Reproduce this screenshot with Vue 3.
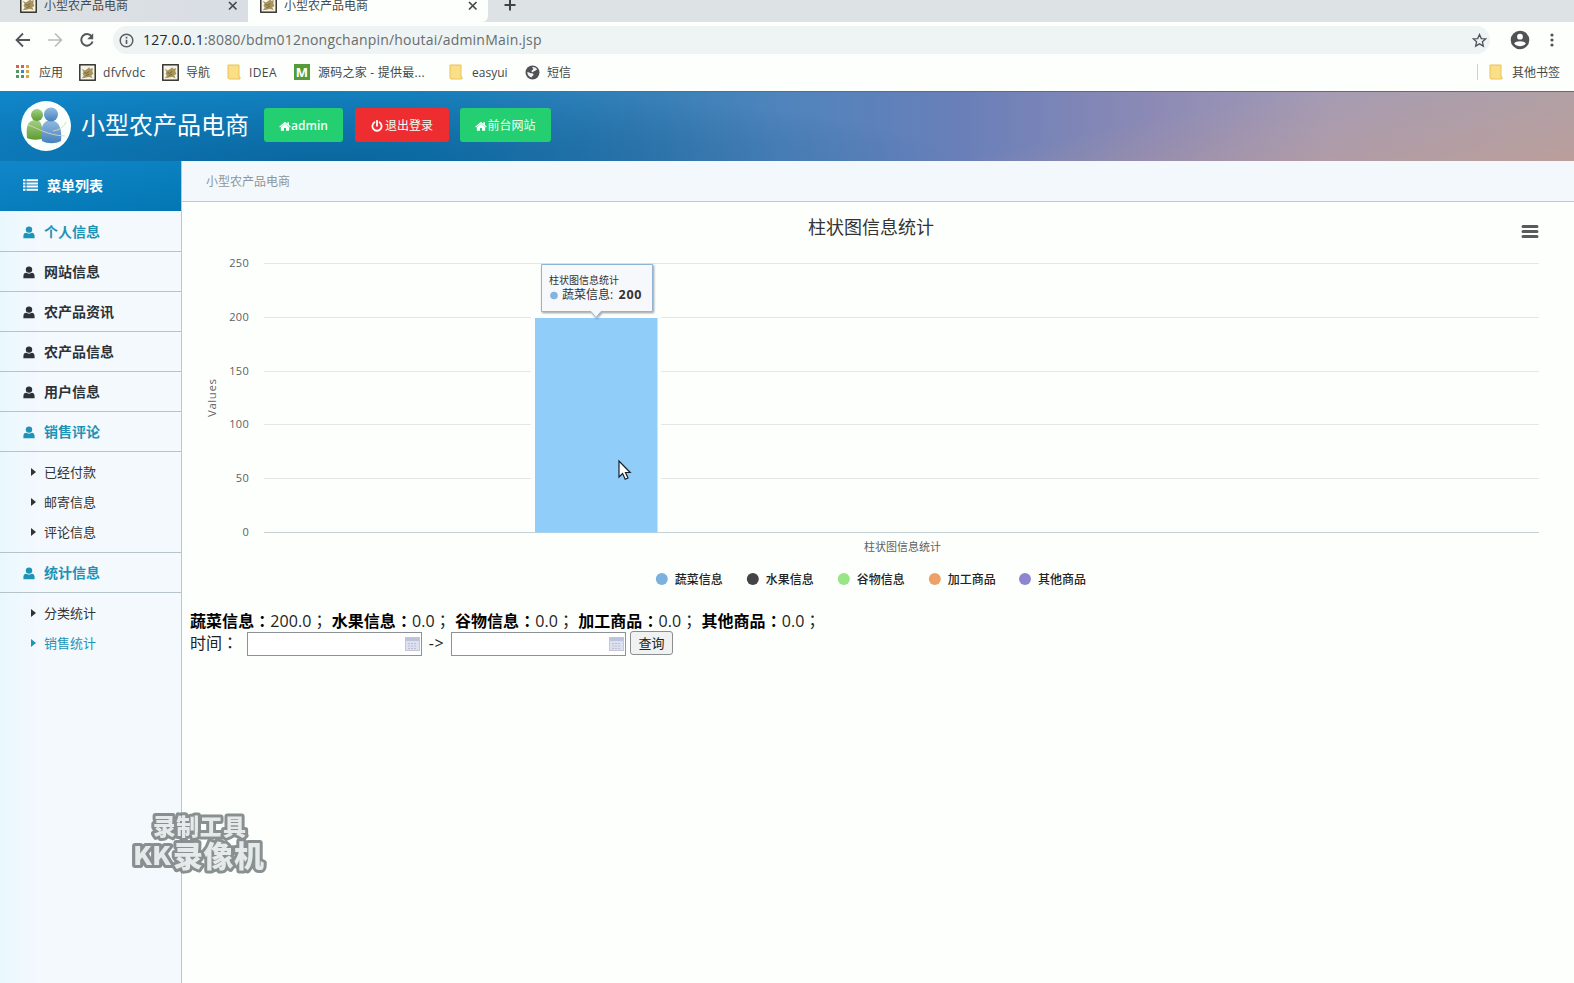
<script setup>
const tabs = [
  { title: '小型农产品电商', active: false },
  { title: '小型农产品电商', active: true }
]
const menu = [
  { label: '个人信息', active: true },
  { label: '网站信息' },
  { label: '农产品资讯' },
  { label: '农产品信息' },
  { label: '用户信息' },
  { label: '销售评论', active: true, children: [{ label: '已经付款' }, { label: '邮寄信息' }, { label: '评论信息' }] },
  { label: '统计信息', active: true, children: [{ label: '分类统计' }, { label: '销售统计', active: true }] }
]
const ticks = [
  { v: 250, y: 263.5 }, { v: 200, y: 317.5 }, { v: 150, y: 371.5 },
  { v: 100, y: 424.5 }, { v: 50, y: 478.5 }, { v: 0, y: 532.5 }
]
const legend = [
  { name: '蔬菜信息', color: '#7cb0df', x: 661.8 },
  { name: '水果信息', color: '#434348', x: 752.8 },
  { name: '谷物信息', color: '#98e585', x: 843.8 },
  { name: '加工商品', color: '#eda168', x: 934.8 },
  { name: '其他商品', color: '#8f84d0', x: 1025 }
]
const totals = [
  ['蔬菜信息', '200.0'], ['水果信息', '0.0'], ['谷物信息', '0.0'], ['加工商品', '0.0'], ['其他商品', '0.0']
]
const appColors = ['#d8604f', '#d8604f', '#d8a54f', '#4f9a62', '#4a7fc9', '#d8a54f', '#4f9a62', '#4f9a62', '#d8a54f']
</script>

<template>
  <div class="page">
    <svg class="defs" width="0" height="0">
      <symbol id="cat" viewBox="0 0 16 16">
        <rect x=".75" y=".75" width="14.5" height="14.5" fill="#f6f4ea" stroke="#26251f" stroke-width="1.3" />
        <path d="M2.500 4.500l3 1.500 2.500-1.500 1.500-1.500 1 1.500 2.800-.5-.8 2.500 1 3-2 1 1.300 3-3-1.200-2 .2-2 .5-3.300.5 2-2.500-1.200-2 1-1.500z" fill="#a8955a" />
        <path d="M5 8l2 .8 2.500-1.800M6.500 11l3-1.500" stroke="#6d6140" stroke-width=".8" fill="none" />
      </symbol>
      <symbol id="folder" viewBox="0 0 14 16">
        <path d="M1 1h11v12h1v2H2l-1-1z" fill="#fbdf86" stroke="#e9c25c" />
      </symbol>
      <symbol id="home" viewBox="0 0 14 12">
        <path d="M7 .8L0 6.8l1 1L7 3l6 4.8 1-1-2.3-2V1.500h-1.900v1.700z" fill="#fff" />
        <path d="M2 7.600L7 3.200l5 4.400V11.700H8.200V8.500H5.800v3.200H2z" fill="#fff" />
      </symbol>
      <symbol id="user" viewBox="0 0 12 13">
        <circle cx="6" cy="3.600" r="3.200" />
        <path d="M.4 12.200V9.800C.6 7.900 1.600 7 3 6.800c1.700 1.100 4.300 1.100 6 0 1.400.2 2.400 1.100 2.600 3v2.400z" />
      </symbol>
    </svg>

    <header class="browser">
      <div class="tabs">
        <div v-for="(t, i) in tabs" :key="i" class="tab" :class="{ on: t.active }">
          <svg class="fav" width="17" height="17"><use href="#cat" /></svg>
          <span>{{ t.title }}</span>
          <svg class="x" width="10" height="10" viewBox="0 0 10 10"><path d="M1 1l7.500 7.500M8.500 1L1 8.500" stroke="#44494c" stroke-width="1.700" /></svg>
        </div>
        <svg class="plus" width="14" height="14" viewBox="0 0 14 14"><path d="M7 1.500v11M1.500 7h11" stroke="#3f4447" stroke-width="2" /></svg>
      </div>
      <div class="toolbar">
        <svg width="16" height="16" viewBox="0 0 16 16"><path d="M15 8H2M8 1.500L1.500 8 8 14.500" fill="none" stroke="#53575a" stroke-width="1.800" /></svg>
        <svg class="fwd" width="16" height="16" viewBox="0 0 16 16"><path d="M1 8h13M8 1.500L14.500 8 8 14.500" fill="none" stroke="#b9bcbd" stroke-width="1.600" /></svg>
        <svg class="reload" width="16" height="16" viewBox="0 0 16 16"><path d="M12.600 4.200A5.800 5.800 0 1 0 13.600 9.500" fill="none" stroke="#53575a" stroke-width="2" /><path d="M14.200 1.200v6H8.200z" fill="#53575a" /></svg>
        <div class="omni">
          <svg width="15" height="15" viewBox="0 0 15 15"><circle cx="7.500" cy="7.500" r="6.300" fill="none" stroke="#5a5e61" stroke-width="1.500" /><path d="M7.500 6.700v4.300M7.500 3.800v1.700" stroke="#5a5e61" stroke-width="1.700" /></svg>
          <span class="url"><b>127.0.0.1</b>:8080/bdm012nongchanpin/houtai/adminMain.jsp</span>
          <svg class="star" width="15" height="15" viewBox="0 0 16 16"><path d="M8 1.600l1.900 4.300 4.700.4-3.500 3.100 1 4.600L8 11.600 3.900 14l1-4.600L1.400 6.300l4.700-.4z" fill="none" stroke="#4f5356" stroke-width="1.400" /></svg>
        </div>
        <svg class="avatar" width="20" height="20" viewBox="0 0 20 20"><circle cx="10" cy="10" r="9.300" fill="#505356" /><circle cx="10" cy="6.700" r="2.900" fill="#fff" /><path d="M4.200 13.600c1.200-3 10.400-3 11.600 0-2.600 3.600-9 3.600-11.600 0z" fill="#fff" /></svg>
        <svg class="dots" width="4" height="14" viewBox="0 0 4 14"><g fill="#505356"><circle cx="2" cy="2" r="1.600" /><circle cx="2" cy="7" r="1.600" /><circle cx="2" cy="12" r="1.600" /></g></svg>
      </div>
      <div class="bookmarks">
        <svg class="apps" width="14" height="14" viewBox="0 0 14 14"><rect v-for="(c, i) in appColors" :key="i" :x="(i % 3) * 5" :y="Math.floor(i / 3) * 5" width="3" height="3" :fill="c" /></svg>
        <span class="b1">应用</span>
        <svg width="17" height="17"><use href="#cat" /></svg><span class="b2">dfvfvdc</span>
        <svg width="17" height="17"><use href="#cat" /></svg><span class="b3">导航</span>
        <svg width="14" height="16"><use href="#folder" /></svg><span class="b4">IDEA</span>
        <i class="m">M</i><span class="b5">源码之家 - 提供最...</span>
        <svg width="14" height="16"><use href="#folder" /></svg><span class="b6">easyui</span>
        <svg width="15" height="15" viewBox="0 0 15 15"><circle cx="7.500" cy="7.500" r="7" fill="#505356" /><path d="M7 2.200c2.500-.4 4.300.8 5.200 2.300-1.200.2-1.400 1.500-2.700 1.500-1 0-.8 1.200-2 1.200-1.500 0-1-2.200.3-2.500C9 4.300 8 3.300 7 2.200zM2.300 7c1.700 0 2.200 1.200 3.700 1.200s2.500.4 2.500 1.600-1.500 1-2 2.700C4 12 2.300 9.800 2.300 7z" fill="#f2f4f4" /></svg><span class="b7">短信</span>
        <div class="other"><svg width="14" height="16"><use href="#folder" /></svg><span>其他书签</span></div>
      </div>
    </header>

    <div class="banner">
      <svg class="logo" width="50" height="50" viewBox="0 0 50 50">
        <defs>
          <linearGradient id="g1" x2="0" y2="1"><stop stop-color="#a3cf86" /><stop offset="1" stop-color="#5f9c33" /></linearGradient>
          <linearGradient id="g2" x2="0" y2="1"><stop stop-color="#93bbe2" /><stop offset="1" stop-color="#4680bd" /></linearGradient>
        </defs>
        <circle cx="25" cy="25" r="25" fill="#f8fffc" />
        <path d="M6 37c-1-11 0-17 8-18 7 0 8 7 7 19-6 1-11 1-15-1z" fill="url(#g1)" />
        <circle cx="16" cy="14" r="6" fill="url(#g1)" />
        <path d="M21 40c-2-15 1-20 9-21 9 1 11 10 10 21-6 3-13 3-19 0z" fill="url(#g2)" />
        <circle cx="30" cy="13.500" r="7" fill="url(#g2)" />
        <path d="M7 24c10 3 18 10 37 11M45 21c-2 5-7 8-13 9" fill="none" stroke="#d7d9b5" stroke-width=".9" />
      </svg>
      <h1>小型农产品电商</h1>
      <a class="btn w1"><svg width="12" height="10"><use href="#home" /></svg>admin</a>
      <a class="btn w2 red"><svg class="pw" width="12" height="12" viewBox="0 0 12 12"><path d="M6 .8v5M3.500 2.300a4.600 4.600 0 1 0 5 0" fill="none" stroke="#fff" stroke-width="1.800" stroke-linecap="round" /></svg>退出登录</a>
      <a class="btn w3"><svg width="12" height="10"><use href="#home" /></svg>前台网站</a>
    </div>

    <div class="body">
      <aside>
        <div class="head"><svg width="15" height="12" viewBox="0 0 15 12"><path d="M0 1.200h2.500M0 4.400h2.500M0 7.600h2.500M0 10.800h2.500M3.500 1.200H15M3.500 4.400H15M3.500 7.600H15M3.500 10.800H15" stroke="#fff" stroke-width="2" /></svg>菜单列表</div>
        <template v-for="m in menu" :key="m.label">
          <div class="item" :class="{ act: m.active }"><svg width="12" height="13"><use href="#user" /></svg>{{ m.label }}</div>
          <div v-if="m.children" class="sub">
            <div v-for="c in m.children" :key="c.label" class="leaf" :class="{ act: c.active }"><i></i>{{ c.label }}</div>
          </div>
        </template>
      </aside>
      <main>
        <div class="crumb">小型农产品电商</div>
        <svg class="chart" width="1392" height="406" viewBox="182 202 1392 406">
          <defs><filter id="sh" x="-10%" y="-20%" width="120%" height="150%"><feDropShadow dx="1" dy="1" stdDeviation="1" flood-opacity=".4" /></filter></defs>
          <text x="808" y="234" font-size="18" fill="#333" textLength="126">柱状图信息统计</text>
          <path d="M1523 226.500h14M1523 231.500h14M1523 236.500h14" stroke="#575b5c" stroke-width="3" stroke-linecap="round" />
          <g v-for="t in ticks" :key="t.v">
            <line x1="264" x2="1539" :y1="t.y" :y2="t.y" :stroke="t.v ? '#e3e7e7' : '#c4d2d6'" />
            <text x="249" :y="t.y + 3.500" text-anchor="end" font-size="11" letter-spacing=".3" fill="#606060">{{ t.v }}</text>
          </g>
          <text transform="translate(216 417) rotate(-90)" font-size="11.500" textLength="38" fill="#666">Values</text>
          <rect x="531" y="315" width="130" height="217" fill="#fdfffd" />
          <rect x="535" y="318" width="122.500" height="214.500" fill="#91cdf9" />
          <path d="M541.500 264.500h111v47H601l-5 6-5-6h-49.500z" fill="#f7f8fb" stroke="#8fb4d8" filter="url(#sh)" />
          <text x="549" y="284" font-size="10" fill="#333" textLength="70">柱状图信息统计</text>
          <circle cx="554" cy="295.500" r="3.800" fill="#83b3df" />
          <text x="562" y="299" font-size="12" fill="#333">蔬菜信息:</text>
          <text x="618.500" y="299" font-size="12.500" font-weight="700" fill="#333" textLength="23">200</text>
          <text x="864" y="551" font-size="11" fill="#606060" textLength="77">柱状图信息统计</text>
          <g v-for="l in legend" :key="l.name">
            <circle :cx="l.x" cy="579" r="6" :fill="l.color" />
            <text :x="l.x + 13" y="584" font-size="12" font-weight="500" fill="#222">{{ l.name }}</text>
          </g>
          <path d="M619 461v16l3.600-3.400 2.600 5.600 2.800-1.200-2.500-5.500h4.700z" fill="#fff" stroke="#16202a" stroke-width="1.200" />
        </svg>
        <div class="totals"><span v-for="t in totals" :key="t[0]"><b>{{ t[0] }}<i>：</i></b>{{ t[1] }}<i>；</i></span></div>
        <div class="query">
          <label>时间<i>：</i></label>
          <div class="date"><svg width="15" height="14" viewBox="0 0 15 14"><rect x=".5" y=".5" width="14" height="13" fill="#dce0ef" stroke="#c3c7d6" /><path d="M1 2.500h13" stroke="#bdc3d8" stroke-width="3" /><path d="M3 6.500h9M3 9h9M3 11.500h9" stroke="#b9bed0" stroke-dasharray="2 1" /></svg></div>
          <span class="arrow">-&gt;</span>
          <div class="date"><svg width="15" height="14" viewBox="0 0 15 14"><rect x=".5" y=".5" width="14" height="13" fill="#dce0ef" stroke="#c3c7d6" /><path d="M1 2.500h13" stroke="#bdc3d8" stroke-width="3" /><path d="M3 6.500h9M3 9h9M3 11.500h9" stroke="#b9bed0" stroke-dasharray="2 1" /></svg></div>
          <button>查询</button>
        </div>
      </main>
    </div>

    <svg class="mark" width="150" height="74" viewBox="0 0 150 74">
      <g font-weight="900" fill="#e4e8e8" stroke="#818888" stroke-width="6" stroke-linejoin="round" paint-order="stroke">
        <text x="27" y="28" font-size="23" textLength="93">录制工具</text>
        <text x="7" y="58" font-size="25" textLength="38" lengthAdjust="spacingAndGlyphs">KK</text>
        <text x="47" y="60" font-size="30" textLength="91">录像机</text>
      </g>
    </svg>
  </div>
</template>

<style>
body { background: #fdfffd; overflow: hidden; }
</style>
<style scoped>
.page { position: relative; width: 1574px; height: 983px; overflow: hidden; background: #fdfffd; font-family: "Open Sans", "Noto Sans CJK SC", sans-serif; color: #333; display: flex; flex-direction: column; }
.page * { box-sizing: border-box; }
.defs { position: absolute; }
svg { flex: none; display: block; }
.browser { height: 91px; flex: none; }
.tabs { height: 22px; background: #dde2e4; display: flex; overflow: hidden; }
.tab { width: 248px; height: 22px; flex: none; display: flex; align-items: flex-start; font-size: 12px; line-height: 17px; color: #45494c; background: linear-gradient(90deg, #dde2e4, #d9dde4); white-space: nowrap; }
.tab .fav { margin: -4px 0 0 20px; }
.tab span { margin: -3px 0 0 7px; width: 84px; }
.tab .x { margin: 1px 0 0 100px; }
.tab.on { width: 240px; background: #fdfffd; border-radius: 0 0 6px 0; }
.tab.on .fav { margin-left: 12px; }
.plus { margin: -2px 0 0 15px; }
.toolbar { height: 36px; display: flex; align-items: center; padding-left: 15px; }
.fwd { margin-left: 16px; }
.reload { margin-left: 16px; }
.omni { margin-left: 18px; width: 1377px; height: 28px; border-radius: 14px; background: #eef3f3; display: flex; align-items: center; padding-left: 6px; }
.url { margin-left: 9px; font-size: 14px; line-height: 20px; letter-spacing: .2px; color: #686c6f; white-space: nowrap; }
.url b { font-weight: 400; color: #25282a; }
.star { margin: 0 3px 0 auto; }
.avatar { margin-left: 20px; }
.dots { margin-left: 20px; }
.bookmarks { height: 33px; display: flex; align-items: center; padding: 0 0 5px 16px; font-size: 12px; line-height: 18px; color: #44484a; white-space: nowrap; }
.bookmarks span { flex: none; position: relative; top: 1px; }
.apps { margin-right: 9px; }
.b1 { width: 40px; }
.b2 { width: 50px; margin-left: 7px; letter-spacing: .3px; margin-right: 9px; }
.b3 { width: 34px; margin-left: 7px; margin-right: 7px; }
.b4 { width: 36px; margin-left: 8px; margin-right: 9px; letter-spacing: .4px; }
.m { width: 16px; height: 16px; background: #559b36; color: #fff; font: 700 13px/16px "Open Sans", sans-serif; text-align: center; }
.b5 { width: 131px; margin-left: 8px; letter-spacing: .25px; }
.b6 { width: 45px; margin-left: 9px; margin-right: 8px; }
.b7 { margin-left: 7px; }
.other { margin-left: auto; padding-left: 11px; border-left: 1px solid #cbd0d2; height: 16px; display: flex; align-items: center; width: 97px; }
.other span { margin-left: 9px; }
.banner { height: 70px; flex: none; display: flex; align-items: center; padding-left: 21px; background: radial-gradient(ellipse 620px 75px at 330px 100%, rgba(0,72,122,.48), rgba(0,82,130,0)), linear-gradient(168deg, rgba(190,150,150,0) 35%, rgba(196,157,145,.65) 100%) 940px 0 / 634px 100% no-repeat, linear-gradient(90deg, #0f86c9 0, #1481bd 420px, #347fb7 630px, #4f84bc 780px, #697fb9 960px, #8c8ab5 1150px, #a49bb5 1330px, #a9a1ae 1574px); border-top: 1px solid #247eb8; }
.logo { margin-top: -2px; }
.banner h1 { margin: -4px 0 0 10px; width: 168px; font-size: 24px; line-height: 34px; font-weight: 400; color: #fff; white-space: nowrap; }
.btn { height: 34px; margin-top: -3px; padding-top: 1px; border-radius: 3px; background: #24cf71; color: #effff4; font-size: 12px; font-weight: 600; line-height: 18px; display: flex; align-items: center; justify-content: center; white-space: nowrap; }
.btn.red { background: #ee2d30; font-weight: 400; }
.pw { margin-right: 2px; }
.w1 { width: 79px; margin-left: 15px; }
.w2 { width: 94px; margin-left: 12px; }
.w3 { width: 91px; margin-left: 11px; font-weight: 400; }
.body { flex: 1; display: flex; min-height: 0; }
aside { width: 182px; flex: none; border-right: 1px solid #b4c9d6; background: linear-gradient(90deg, #e9f8fd 0, #f4f9fe 40px, #f4f9fe 100%); }
.head { width: 181px; height: 50px; padding: 0 0 2px 23px; display: flex; align-items: center; gap: 9px; color: #fff; font-size: 14px; font-weight: 700; background: linear-gradient(170deg, #1187ca, #0377b3); margin-bottom: 1px; }
.item { height: 40px; padding: 0 0 1px 23px; display: flex; align-items: center; gap: 9px; font-size: 14px; font-weight: 600; color: #2d3236; fill: #2d3236; border-bottom: 1px solid #b6c3cb; }
.item svg { position: relative; top: 1px; }
.act, .item.act { color: #1d93b5; fill: #1d93b5; }
.sub { padding: 4px 0 6px; }
.sub + .item { border-top: 1px solid #b6c3cb; height: 41px; }
.leaf { height: 30px; padding-left: 31px; display: flex; align-items: center; font-size: 13px; }
.leaf i { width: 0; border: 4px solid transparent; border-left: 5px solid currentColor; border-right: 0; margin: 2px 8px 0 0; }
main { flex: 1; min-width: 0; }
.crumb { height: 41px; padding-left: 24px; font-size: 12px; line-height: 41px; color: #8d969b; background: #f3f8fc; border-bottom: 1px solid #bfcbd3; }
.chart { font-family: "Open Sans", "Noto Sans CJK SC", sans-serif; }
.totals { margin-left: 8px; height: 24px; line-height: 24px; font-size: 16px; color: #222; display: flex; gap: 4.200px; letter-spacing: .06px; white-space: nowrap; }
.totals b { color: #000; }
.totals i, .query i { font-style: normal; font-family: "Noto Sans CJK TC", sans-serif; }
.query { margin-left: 8px; height: 24px; display: flex; align-items: center; font-size: 16px; color: #222; }
.query label { width: 57px; line-height: 22px; margin-top: -3px; white-space: nowrap; }
.date { width: 175px; height: 24px; border: 1px solid #8d9299; background: #fff; display: flex; align-items: center; justify-content: flex-end; padding-right: 1px; }
.arrow { width: 29px; text-align: center; line-height: 20px; letter-spacing: .6px; margin-top: -2px; }
button { width: 43px; height: 24px; margin: -2px 0 0 4px; padding: 0; font: 13px/18px "Noto Sans CJK SC", sans-serif; color: #222; background: #f0f1f1; border: 1px solid #8a8e90; border-radius: 3px; }
.mark { position: absolute; left: 126px; top: 807px; opacity: .93; font-family: "Noto Sans CJK SC", sans-serif; }
</style>
